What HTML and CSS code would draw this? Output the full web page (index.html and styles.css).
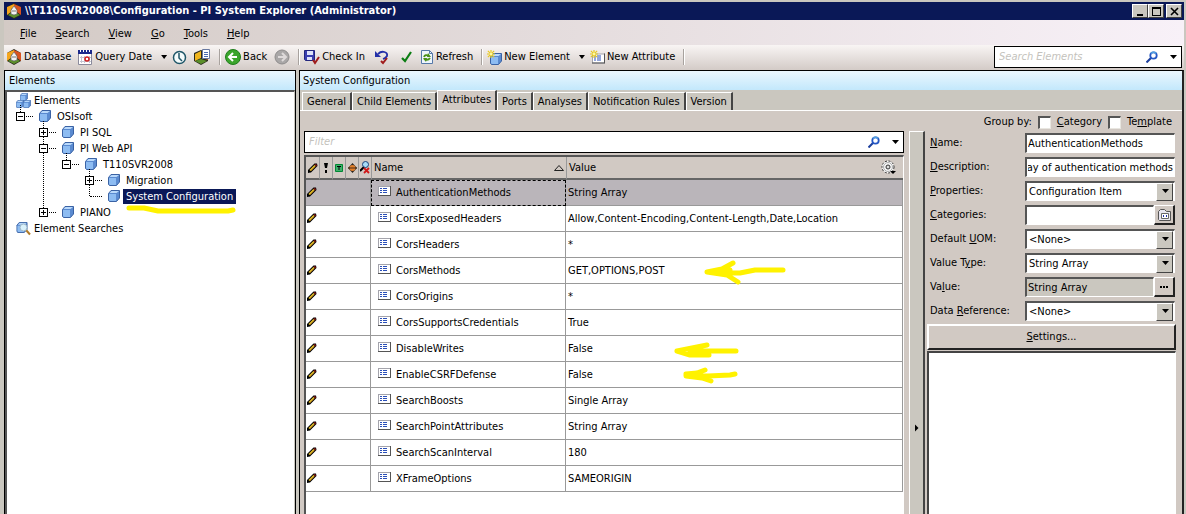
FILE: index.html
```html
<!DOCTYPE html>
<html lang="en">
    <head>
        <meta charset="UTF-8" />
        <meta name="viewport" content="width=device-width, initial-scale=1.0" />
        <title>PI System Explorer</title>
        <link rel="stylesheet" href="styles.css">
    </head>

    <body>
        <!-- shared icons -->
        <svg class="defs" width="0" height="0">
            <symbol id="hex" viewBox="0 0 16 16">
                <path d="M8 0L15 4V12L8 16L1 12V4Z" fill="#2b2a1e" />
                <path d="M8 1L1 4V12L5 9V6L8 5Z" fill="#f5a61c" />
                <path d="M8 1L15 4V12L11 9V6L8 5Z" fill="#d9531e" />
                <path d="M8 15L2 12L5 10H11L14 12Z" fill="#5b8f2a" />
                <path d="M5 7L8 3L11 7V11L8 12L5 11Z" fill="#f2f2f2" stroke="#666" stroke-width=".7" />
                <path d="M6 8H10" stroke="#777" />
            </symbol>
            <symbol id="cube" viewBox="0 0 12 12">
                <path d="M0.5 3.5L3 0.5H11.5V8L8.5 11.5H1.5L0.5 10.5Z" fill="#5a8ad0" stroke="#3a62a4" />
                <path d="M1 4H8V11H2L1 10Z" fill="#8dbcf2" />
                <path d="M1.5 3L3.5 1H11L8.5 3Z" fill="#b9d9fb" />
            </symbol>
            <symbol id="cubes" viewBox="0 0 15 15">
                <use href="#cube" x="4" y="0" width="8" height="8" />
                <use href="#cube" x="0" y="7" width="8" height="8" />
                <use href="#cube" x="7" y="7" width="8" height="8" />
            </symbol>
            <symbol id="cube-search" viewBox="0 0 15 15">
                <use href="#cube" x="0" y="1" width="12" height="11" />
                <path d="M10 9L14 13.5" stroke="#b07a28" stroke-width="2" />
                <circle cx="7.5" cy="6.5" r="3.5" fill="#d9f1fb" stroke="#9fb8c8" />
            </symbol>
            <symbol id="lens" viewBox="0 0 12 12">
                <path d="M0.5 11.5L5 7" stroke="#1c3f9e" stroke-width="2" />
                <circle cx="7.5" cy="4.5" r="3.2" fill="#fff" stroke="#2456c4" stroke-width="1.8" />
                <path d="M5 2.5Q7.5 0 10 2.5" fill="none" stroke="#4f9fe0" stroke-width="1.5" />
            </symbol>
            <symbol id="pencil" viewBox="0 0 10 10">
                <path d="M0 10V7L6.5 .5H9L9.5 3L3 9.500Z" />
                <path d="M2 7.500L7 2.500" stroke="#e8c028" stroke-width="1.600" />
                <path d="M3 8L7.500 3.500" stroke="#9a6a18" stroke-width=".8" />
                <path d="M6.500 1.500H8.500V3.500" fill="#d02020" />
            </symbol>
            <symbol id="attr" viewBox="0 0 13 10">
                <path d="M0 0H13V10H0Z" fill="#a4a4ac" />
                <path d="M1 1H12V9H1Z" fill="#fff" />
                <path d="M12 0H13V10H0V9H12Z" fill="#555" />
                <path d="M2 2.5H4M2 4.5H4M2 6.5H4M5 2.5H9M5 4.5H9M5 6.5H9" stroke="#2a4fb8" />
            </symbol>
            <symbol id="spark" viewBox="0 0 9 9">
                <path d="M4.5 0V9M0 4.5H9M1 1L8 8M8 1L1 8" stroke="#e8c81c" stroke-width="1.3" />
                <circle cx="4.5" cy="4.5" r="1.6" fill="#fff8a0" />
            </symbol>
        </svg>

        <header class="titlebar">
            <svg class="app-icon" width="16" height="16"><use href="#hex" /></svg>
            <h1>\\T110SVR2008\Configuration - PI System Explorer (Administrator)</h1>
            <div class="window-buttons">
                <button aria-label="Minimize"><svg width="9" height="9"><path d="M1 7H7V9H1Z" /></svg></button>
                <button aria-label="Maximize"><svg width="9" height="9"><path d="M0 0H9V9H0ZM1 2V8H8V2Z" fill-rule="evenodd" /></svg></button>
                <button class="close" aria-label="Close"><svg width="9" height="9"><path d="M1 1L8 8M8 1L1 8" stroke="#000" stroke-width="1.6" /></svg></button>
            </div>
        </header>

        <nav class="menu">
            <button><u>F</u>ile</button>
            <button><u>S</u>earch</button>
            <button><u>V</u>iew</button>
            <button><u>G</u>o</button>
            <button><u>T</u>ools</button>
            <button><u>H</u>elp</button>
        </nav>

        <div class="toolbar">
            <button><svg width="16" height="16"><use href="#hex" /></svg>Database</button>
            <button>
                <svg width="15" height="15">
                    <path d="M.500 1H13.500V14.500H.500Z" fill="#fff" stroke="#8a8a9c" />
                    <path d="M0 0H14V4H0Z" fill="#1c2a8c" />
                    <path d="M2.500 0V2M5.500 0V2M8.500 0V2M11.500 0V2" stroke="#fff" />
                    <path d="M3.500 6V13M6.500 6V13M11.500 6V13M2 7.500H13M2 11.500H13" stroke="#c4c4d0" />
                    <circle cx="9" cy="9" r="2" fill="#fff" stroke="#d02020" stroke-width="1.500" />
                </svg>Query Date
            </button>
            <button class="drop" aria-label="Query date options"></button>
            <button aria-label="Time">
                <svg width="15" height="15">
                    <circle cx="7.500" cy="7.500" r="6" fill="#f4fbfb" stroke="#1f5668" stroke-width="1.500" />
                    <path d="M7 3V8L10 11" fill="none" stroke="#1f5668" stroke-width="1.500" />
                </svg>
            </button>
            <button aria-label="Databases">
                <svg width="17" height="16">
                    <path d="M7 1L0 4V12L7 16L14 12V4Z" fill="#2b2a1e" />
                    <path d="M1 5L7 2V9L1 12Z" fill="#f0b41c" />
                    <path d="M8 2L14 5V11L8 9Z" fill="#b8641e" />
                    <path d="M7 10L13 12L7 15L1 12Z" fill="#5b8f2a" />
                    <path d="M8.500 .5H15.500V9.500H8.500Z" fill="#fff" stroke="#6878a0" />
                    <path d="M10 3.500H14M10 5.500H14M10 7.500H14" stroke="#4c6ab0" />
                </svg>
            </button>
            <span class="sep"></span>
            <button>
                <svg width="16" height="16">
                    <circle cx="8" cy="8" r="7.500" fill="#3ba52c" stroke="#1f7d1c" />
                    <path d="M12 8H5M8 4L4 8L8 12" fill="none" stroke="#fff" stroke-width="2" />
                </svg>Back
            </button>
            <button aria-label="Forward">
                <svg width="16" height="16">
                    <circle cx="8" cy="8" r="7" fill="#a9a7a7" stroke="#8e8c8c" />
                    <path d="M4 8H11M8 4L12 8L8 12" fill="none" stroke="#dedada" stroke-width="2" />
                </svg>
            </button>
            <span class="sep"></span>
            <button>
                <svg width="16" height="16">
                    <path d="M0.500 1.500H10.500V11.500H1.500L.5 10.500Z" fill="#3b3fb0" stroke="#23267c" />
                    <path d="M3 2H9V6H3ZM3 8H8V11H3Z" fill="#dfe3f8" />
                    <path d="M9 11L11 14L15 8" fill="none" stroke="#a01c1c" stroke-width="2" />
                </svg>Check In
            </button>
            <button class="wide" aria-label="Undo check out">
                <svg width="15" height="15">
                    <path d="M3 4C7 0 13 2 12 6Q11 8 8 9" fill="none" stroke="#2430a8" stroke-width="1.800" />
                    <path d="M0 1V7H6Z" fill="#2430a8" />
                    <path d="M6 11L8 13L12 8" fill="none" stroke="#a01c1c" stroke-width="2" />
                </svg>
            </button>
            <button class="wide" aria-label="Apply"><svg width="11" height="12"><path d="M1 7L4 10L10 1" fill="none" stroke="#0b7d12" stroke-width="2.200" /></svg></button>
            <button>
                <svg width="14" height="16">
                    <path d="M1.500 1.500H9.500L12.500 4.500V14.500H1.500Z" fill="#eef5fc" stroke="#5578a8" />
                    <path d="M9.500 1.500V4.500H12.500" fill="none" stroke="#5578a8" />
                    <path d="M4 8Q5 5 9 7M10 9Q8 12 4 10" fill="none" stroke="#4b9018" stroke-width="1.800" />
                    <path d="M8 4L11 8H7ZM6 13L3 9H7Z" fill="#4b9018" />
                </svg>Refresh
            </button>
            <span class="sep"></span>
            <button>
                <svg width="15" height="15">
                    <use href="#cube" x="3" y="3" width="12" height="12" />
                    <use href="#spark" x="0" y="0" width="8" height="8" />
                </svg>New Element
            </button>
            <button class="drop" aria-label="New element options"></button>
            <button>
                <svg width="15" height="15">
                    <use href="#attr" x="2" y="3" width="13" height="11" />
                    <use href="#spark" x="0" y="0" width="8" height="8" />
                </svg>New Attribute
            </button>
            <span class="sep"></span>
            <div class="search-box top-search">
                <input type="text" placeholder="Search Elements" aria-label="Search Elements">
                <svg width="12" height="12"><use href="#lens" /></svg>
                <button class="drop" aria-label="Search options"></button>
            </div>
        </div>

        <main class="workspace">
            <section class="panel browser">
                <h2>Elements</h2>
                <ul class="tree">
                    <li>
                        <div class="node root"><svg width="15" height="15"><use href="#cubes" /></svg><span>Elements</span></div>
                        <ul>
                            <li>
                                <div class="node"><i class="toggle open"></i><svg width="12" height="12"><use href="#cube" /></svg><span>OSIsoft</span></div>
                                <ul>
                                    <li><div class="node"><i class="toggle"></i><svg width="12" height="12"><use href="#cube" /></svg><span>PI SQL</span></div></li>
                                    <li>
                                        <div class="node"><i class="toggle open"></i><svg width="12" height="12"><use href="#cube" /></svg><span>PI Web API</span></div>
                                        <ul>
                                            <li>
                                                <div class="node"><i class="toggle open"></i><svg width="12" height="12"><use href="#cube" /></svg><span>T110SVR2008</span></div>
                                                <ul>
                                                    <li><div class="node"><i class="toggle"></i><svg width="12" height="12"><use href="#cube" /></svg><span>Migration</span></div></li>
                                                    <li><div class="node"><i class="leaf"></i><svg width="12" height="12"><use href="#cube" /></svg><span class="selected">System Configuration</span></div></li>
                                                </ul>
                                            </li>
                                        </ul>
                                    </li>
                                    <li><div class="node"><i class="toggle"></i><svg width="12" height="12"><use href="#cube" /></svg><span>PIANO</span></div></li>
                                </ul>
                            </li>
                        </ul>
                    </li>
                    <li><div class="node root"><svg width="15" height="15"><use href="#cube-search" /></svg><span>Element Searches</span></div></li>
                </ul>
            </section>

            <section class="panel viewer">
                <h2>System Configuration</h2>
                <div class="tabs" role="tablist">
                    <button role="tab">General</button>
                    <button role="tab">Child Elements</button>
                    <button role="tab" class="current" aria-selected="true">Attributes</button>
                    <button role="tab">Ports</button>
                    <button role="tab">Analyses</button>
                    <button role="tab">Notification Rules</button>
                    <button role="tab">Version</button>
                </div>

                <div class="page">
                    <div class="group-by">
                        <span>Group by:</span>
                        <input type="checkbox" id="by-category"><label for="by-category"><u>C</u>ategory</label>
                        <input type="checkbox" id="by-template"><label for="by-template">Te<u>m</u>plate</label>
                    </div>

                    <div class="columns">
                        <div class="list">
                            <div class="search-box">
                                <input type="text" placeholder="Filter" aria-label="Filter">
                                <svg width="12" height="12"><use href="#lens" /></svg>
                                <button class="drop" aria-label="Filter options"></button>
                            </div>
                            <div class="grid">
                                <table>
                                    <colgroup>
                                        <col class="c-flag"><col class="c-flag"><col class="c-flag"><col class="c-flag"><col class="c-flag">
                                        <col class="c-name"><col>
                                    </colgroup>
                                    <thead>
                                        <tr>
                                            <th><svg width="10" height="10"><use href="#pencil" /></svg></th>
                                            <th><svg width="4" height="10"><path d="M0 0H4L3 5H1ZM1 7H3V10H1Z" /></svg></th>
                                            <th><svg width="8" height="8"><path d="M.5 .5H7.500V7.500H.5Z" fill="#3fae6a" stroke="#083" /><path d="M2 2H6V3H4.500V6H3.500V3H2Z" /></svg></th>
                                            <th><svg width="9" height="10"><path d="M4.500 0L9 5L4.500 10L0 5Z" fill="#2c2620" /><circle cx="4.500" cy="5" r="3" fill="#e2802c" /><path d="M0 5H9" stroke="#4a2c14" /></svg></th>
                                            <th><svg width="10" height="13"><path d="M0 10L4 6" stroke="#000" stroke-width="2" /><circle cx="5.500" cy="3.500" r="3" fill="#a8dcf8" stroke="#184078" /><path d="M4 7L9 12M9 7L4 12" stroke="#d01818" stroke-width="1.800" /></svg></th>
                                            <th><div class="th-text">Name<svg width="10" height="6"><path d="M.5 5.500L5 .5L9.500 5.500Z" fill="none" stroke="#222" /></svg></div></th>
                                            <th><div class="th-text value">Value
                                                <svg width="16" height="16">
                                                    <circle cx="7" cy="7" r="6" fill="#fff" stroke="#333" stroke-dasharray="2 1.500" />
                                                    <circle cx="7" cy="7" r="4.500" fill="#f4f4f4" stroke="#999" stroke-width=".8" />
                                                    <circle cx="7" cy="7" r="2" fill="#ddd" stroke="#333" />
                                                    <path d="M9 11H15L12 14Z" />
                                                </svg></div></th>
                                        </tr>
                                    </thead>
                                    <tbody>
                                        <tr class="active"><td colspan="5"><svg width="10" height="10"><use href="#pencil" /></svg></td><td class="name"><svg width="13" height="10"><use href="#attr" /></svg>AuthenticationMethods</td><td>String Array</td></tr>
                                        <tr><td colspan="5"><svg width="10" height="10"><use href="#pencil" /></svg></td><td class="name"><svg width="13" height="10"><use href="#attr" /></svg>CorsExposedHeaders</td><td>Allow,Content-Encoding,Content-Length,Date,Location</td></tr>
                                        <tr><td colspan="5"><svg width="10" height="10"><use href="#pencil" /></svg></td><td class="name"><svg width="13" height="10"><use href="#attr" /></svg>CorsHeaders</td><td>*</td></tr>
                                        <tr><td colspan="5"><svg width="10" height="10"><use href="#pencil" /></svg></td><td class="name"><svg width="13" height="10"><use href="#attr" /></svg>CorsMethods</td><td>GET,OPTIONS,POST</td></tr>
                                        <tr><td colspan="5"><svg width="10" height="10"><use href="#pencil" /></svg></td><td class="name"><svg width="13" height="10"><use href="#attr" /></svg>CorsOrigins</td><td>*</td></tr>
                                        <tr><td colspan="5"><svg width="10" height="10"><use href="#pencil" /></svg></td><td class="name"><svg width="13" height="10"><use href="#attr" /></svg>CorsSupportsCredentials</td><td>True</td></tr>
                                        <tr><td colspan="5"><svg width="10" height="10"><use href="#pencil" /></svg></td><td class="name"><svg width="13" height="10"><use href="#attr" /></svg>DisableWrites</td><td>False</td></tr>
                                        <tr><td colspan="5"><svg width="10" height="10"><use href="#pencil" /></svg></td><td class="name"><svg width="13" height="10"><use href="#attr" /></svg>EnableCSRFDefense</td><td>False</td></tr>
                                        <tr><td colspan="5"><svg width="10" height="10"><use href="#pencil" /></svg></td><td class="name"><svg width="13" height="10"><use href="#attr" /></svg>SearchBoosts</td><td>Single Array</td></tr>
                                        <tr><td colspan="5"><svg width="10" height="10"><use href="#pencil" /></svg></td><td class="name"><svg width="13" height="10"><use href="#attr" /></svg>SearchPointAttributes</td><td>String Array</td></tr>
                                        <tr><td colspan="5"><svg width="10" height="10"><use href="#pencil" /></svg></td><td class="name"><svg width="13" height="10"><use href="#attr" /></svg>SearchScanInterval</td><td>180</td></tr>
                                        <tr><td colspan="5"><svg width="10" height="10"><use href="#pencil" /></svg></td><td class="name"><svg width="13" height="10"><use href="#attr" /></svg>XFrameOptions</td><td>SAMEORIGIN</td></tr>
                                    </tbody>
                                </table>
                            </div>
                        </div>

                        <button class="collapse" aria-label="Collapse details"></button>

                        <div class="details">
                            <div class="field"><label for="name"><u>N</u>ame:</label><input type="text" id="name" value="AuthenticationMethods"></div>
                            <div class="field"><label for="description"><u>D</u>escription:</label><input type="text" id="description" class="scrolled" value="Array of authentication methods"></div>
                            <div class="field"><label for="properties"><u>P</u>roperties:</label><div class="select"><select id="properties"><option>Configuration Item</option></select></div></div>
                            <div class="field"><label for="categories"><u>C</u>ategories:</label><input type="text" id="categories"><button class="side" aria-label="Choose categories">
                                <svg width="13" height="12"><path d="M.5 10.500V2.500L2.500 .5H6.500L8.500 2.500H12.500V11.500H1.500Z" fill="#e8e6f0" stroke="#555" /><path d="M3.500 4.500H10.500V9.500H3.500Z" fill="#fff" stroke="#666" /><path d="M5 7H6M8 7H9" stroke="#2430a8" stroke-width="2" /></svg></button></div>
                            <div class="field"><label for="uom">Default <u>U</u>OM:</label><div class="select"><select id="uom"><option>&lt;None&gt;</option></select></div></div>
                            <div class="field"><label for="type">Value T<u>y</u>pe:</label><div class="select"><select id="type"><option>String Array</option></select></div></div>
                            <div class="field"><label for="value">Va<u>l</u>ue:</label><input type="text" id="value" class="readonly" value="String Array" readonly><button class="side" aria-label="Edit value"><svg width="9" height="2"><path d="M0 0H2V2H0ZM3 0H5V2H3ZM6 0H8V2H6Z" /></svg></button></div>
                            <div class="field"><label for="reference">Data <u>R</u>eference:</label><div class="select"><select id="reference"><option>&lt;None&gt;</option></select></div></div>
                            <button class="settings"><u>S</u>ettings...</button>
                            <div class="preview"></div>
                        </div>
                    </div>
                </div>
            </section>
        </main>

        <!-- hand drawn marker strokes -->
        <svg class="marker" width="800" height="400">
            <path d="M129 208L144 208L158 211H228L233 210" />
            <path d="M707 272L722 269L733 263M707 272L727 275L738 282M707 272L740 273L755 270H783M717 272L730 270" />
            <path d="M677 351L692 348L707 345M677 351L690 355H709M690 351H736" />
            <path d="M686 374L697 373L705 370M686 374L686 376L702 378L711 381M690 375L708 376L730 375L735 374" />
        </svg>
    </body>
</html>
```
FILE: styles.css
```css
* {
    box-sizing: border-box;
    padding: 0;
    margin: 0;
}

body {
    display: flex;
    flex-direction: column;
    height: 100vh;
    padding: 2px 2px 0 4px;
    overflow: hidden;
    background-color: #cac7bf;
    font: 11px/16px "DejaVu Sans Condensed", "Liberation Sans", sans-serif;
    color: #000;
}

button,
input,
select {
    font: inherit;
    color: inherit;
    border: 0;
    border-radius: 0;
    background: none;
    outline: none;
}

h1,
h2 {
    font-size: 11px;
}

svg {
    flex: none;
    display: block;
}

.defs {
    position: absolute;
}

/* title bar */
.titlebar {
    display: flex;
    align-items: center;
    height: 18px;
    padding: 0 2px;
    background-color: #0a1857;
    color: #fff;
}

.titlebar h1 {
    flex: 1;
    margin-left: 3px;
    white-space: nowrap;
}

.window-buttons {
    display: flex;
}

.window-buttons button {
    display: flex;
    align-items: center;
    justify-content: center;
    width: 16px;
    height: 14px;
    background-color: #cac7bf;
    border: 1px solid #fff;
    border-right-color: #404040;
    border-bottom-color: #404040;
}

.window-buttons .close {
    margin-left: 2px;
}

/* menu */
.menu {
    display: flex;
    gap: 19px;
    height: 25px;
    padding: 2px 16px 0;
    background: linear-gradient(to right, #d3cac5, #f8f1f8);
}

/* toolbar */
.toolbar {
    display: flex;
    align-items: center;
    height: 25px;
    padding: 0 2px 1px;
    background: linear-gradient(#f9f5f4, #d3cbc7);
}

.toolbar > button {
    display: flex;
    align-items: center;
    gap: 2px;
    margin-right: 7px;
    white-space: nowrap;
}

.toolbar > .wide {
    margin: 0 8px 0 3px;
}

.drop {
    width: 7px;
    height: 4px;
    background-color: #000;
    clip-path: polygon(0 0, 100% 0, 50% 100%);
}

.toolbar > .drop {
    width: 6px;
    margin: 0 5px 0 2px;
}

.sep {
    width: 2px;
    height: 16px;
    margin: 0 4px 0 1px;
    background-color: #a8a29e;
    border-right: 1px solid #fff;
}

.search-box {
    display: flex;
    align-items: center;
    height: 22px;
    padding: 0 4px;
    border: 1px solid #000;
    background-color: #fff;
}

.search-box input {
    flex: 1;
    min-width: 0;
    font-style: italic;
}

.search-box input::placeholder {
    color: #c4c2bc;
}

.search-box .drop {
    margin-left: 12px;
}

.top-search {
    width: 188px;
    margin-left: auto;
}

/* panels */
.workspace {
    flex: 1;
    display: flex;
    gap: 3px;
    min-height: 0;
}

.panel {
    display: flex;
    flex-direction: column;
    border: 1px solid #000;
    border-bottom: 0;
}

.panel h2 {
    height: 19px;
    padding: 2px 3px;
    background: linear-gradient(#ebf7fe, #c3e8fc);
    font-weight: normal;
}

.browser {
    width: 292px;
}

.browser h2 {
    padding-left: 4px;
}

.viewer {
    flex: 1;
    min-width: 0;
    border-right: 2px solid #222;
}

/* element tree */
.tree {
    flex: 1;
    padding: 0 0 0 9px;
    border: 2px solid #555;
    border-width: 2px 1px 0 2px;
    border-right-color: #cac7bf;
    background-color: #fff;
    list-style: none;
}

.tree ul {
    list-style: none;
    padding-left: 23px;
}

.tree > li > ul {
    padding-left: 0;
}

.tree ul li {
    position: relative;
}

.tree ul li::before {
    content: "";
    position: absolute;
    top: -3px;
    bottom: 0;
    left: 4px;
    border-left: 1px dotted #000;
}

.tree ul li:last-child::before {
    bottom: auto;
    height: 11px;
}

.node {
    display: flex;
    align-items: center;
    height: 16px;
    white-space: nowrap;
}

.node svg {
    margin-right: 3px;
}

.node span {
    padding: 0 3px;
    line-height: 15px;
}

.root span {
    padding-left: 0;
}

.node .selected {
    background-color: #0a1857;
    color: #fff;
}

.toggle,
.leaf {
    position: relative;
    width: 9px;
    height: 9px;
    margin-right: 14px;
}

.toggle {
    border: 1px solid #000;
    background: linear-gradient(#000, #000) center / 5px 1px no-repeat, linear-gradient(#000, #000) center / 1px 5px no-repeat, #fff;
}

.toggle.open {
    background: linear-gradient(#000, #000) center / 5px 1px no-repeat, #fff;
}

.toggle::after,
.leaf::after {
    content: "";
    position: absolute;
    top: 3px;
    left: 9px;
    width: 7px;
    border-top: 1px dotted #000;
}

.leaf::after {
    top: 4px;
    left: 5px;
    width: 12px;
}

/* tabs */
.tabs {
    display: flex;
    align-items: flex-end;
    height: 20px;
    padding-left: 2px;
    background-color: #cac7bf;
}

.tabs button {
    height: 18px;
    padding: 1px 4px 0;
    border: 1px solid #fff;
    border-width: 1px 2px 0 1px;
    border-right-color: #444;
    white-space: nowrap;
}

.tabs .current {
    height: 20px;
    padding: 0 4px 1px;
    background-color: #d1c9c3;
}

.page {
    flex: 1;
    display: flex;
    flex-direction: column;
    min-height: 0;
    border-top: 1px solid #fff;
    background-color: #d1c9c3;
}

.group-by {
    display: flex;
    align-items: center;
    justify-content: flex-end;
    gap: 6px;
    height: 20px;
    padding: 2px 10px 0 0;
}

.group-by input {
    appearance: none;
    width: 13px;
    height: 13px;
    background-color: #fff;
    border: 2px solid #555;
    border-right: 1px solid #e8e6e0;
    border-bottom: 1px solid #e8e6e0;
}

.columns {
    flex: 1;
    display: flex;
    min-height: 0;
}

.list {
    flex: 1;
    display: flex;
    flex-direction: column;
    gap: 2px;
    min-width: 0;
    padding-left: 4px;
}

/* attribute table */
.grid {
    flex: 1;
    border: 2px solid #555;
    border-right: 1px solid #fff;
    border-bottom: 0;
    background-color: #fff;
    overflow: hidden;
}

table {
    width: 100%;
    table-layout: fixed;
    border-collapse: separate;
    border-spacing: 0;
}

.c-flag {
    width: 13px;
}

.c-name {
    width: 195px;
}

th {
    height: 23px;
    background-color: #d1c9c3;
    border-bottom: 2px solid #666;
    font-weight: normal;
    text-align: left;
}

th + th {
    border-left: 1px solid #999;
}

th > svg {
    margin: 0 auto;
}

.th-text {
    display: flex;
    align-items: center;
    justify-content: space-between;
    padding: 0 2px;
}

.th-text.value {
    padding-right: 6px;
}

td {
    height: 26px;
    padding-left: 2px;
    border-right: 1px solid #999;
    border-bottom: 1px solid #999;
    white-space: nowrap;
}

td:first-child {
    padding: 0 0 2px 1px;
}

.name svg {
    display: inline-block;
    margin: 0 5px 0 5px;
}

.active td {
    background-color: #bab5ba;
}

.active .name {
    outline: 1px dashed #000;
    outline-offset: -1px;
}

/* splitter between list and details */
.collapse {
    display: flex;
    align-items: center;
    justify-content: center;
    width: 16px;
    margin: 0 2px 0 5px;
    border: 1px solid #fff;
    border-width: 1px 2px 0 1px;
    border-right-color: #444;
    background-color: #cac7bf;
}

.collapse::before {
    content: "";
    width: 4px;
    height: 8px;
    margin-top: 210px;
    background-color: #000;
    clip-path: polygon(0 0, 100% 50%, 0 100%);
}

/* details form */
.details {
    display: flex;
    flex-direction: column;
    width: 249px;
    margin-right: 6px;
}

.field {
    display: flex;
    align-items: center;
    height: 24px;
    padding-right: 1px;
}

.field label {
    width: 98px;
    padding-left: 3px;
}

.field input,
.select {
    flex: 1;
    min-width: 0;
    height: 20px;
    padding: 0 1px;
    border: 2px solid #555;
    border-right: 1px solid #fff;
    border-bottom: 1px solid #fff;
    background-color: #fff;
}

.field .readonly {
    background-color: #cac7bf;
}

.field .scrolled {
    direction: rtl;
}

.select {
    position: relative;
}

.select select {
    appearance: none;
    width: 100%;
    height: 17px;
    padding-left: 1px;
}

.select::before {
    content: "";
    position: absolute;
    top: 0;
    right: 1px;
    width: 15px;
    height: 16px;
    border: 1px solid #fff;
    border-right-color: #444;
    border-bottom-color: #444;
    background-color: #cac7bf;
    pointer-events: none;
}

.select::after {
    content: "";
    position: absolute;
    top: 6px;
    right: 5px;
    width: 7px;
    height: 4px;
    background-color: #000;
    clip-path: polygon(0 0, 100% 0, 50% 100%);
    pointer-events: none;
}

.side {
    display: flex;
    align-items: center;
    justify-content: center;
    width: 21px;
    height: 20px;
    border: 1px solid #fff;
    border-width: 1px 2px 2px 1px;
    border-right-color: #222;
    border-bottom-color: #222;
}

.settings {
    height: 26px;
    margin-top: 1px;
    border: 2px solid #fff;
    border-right-color: #222;
    border-bottom-color: #222;
}

.preview {
    flex: 1;
    margin-top: 1px;
    border: 2px solid #444;
    border-right: 1px solid #fff;
    border-bottom: 0;
    background-color: #fff;
}

.marker {
    position: absolute;
    top: 0;
    left: 0;
    fill: none;
    stroke: #fff200;
    stroke-width: 5;
    stroke-linecap: round;
    stroke-linejoin: round;
    pointer-events: none;
}
```
